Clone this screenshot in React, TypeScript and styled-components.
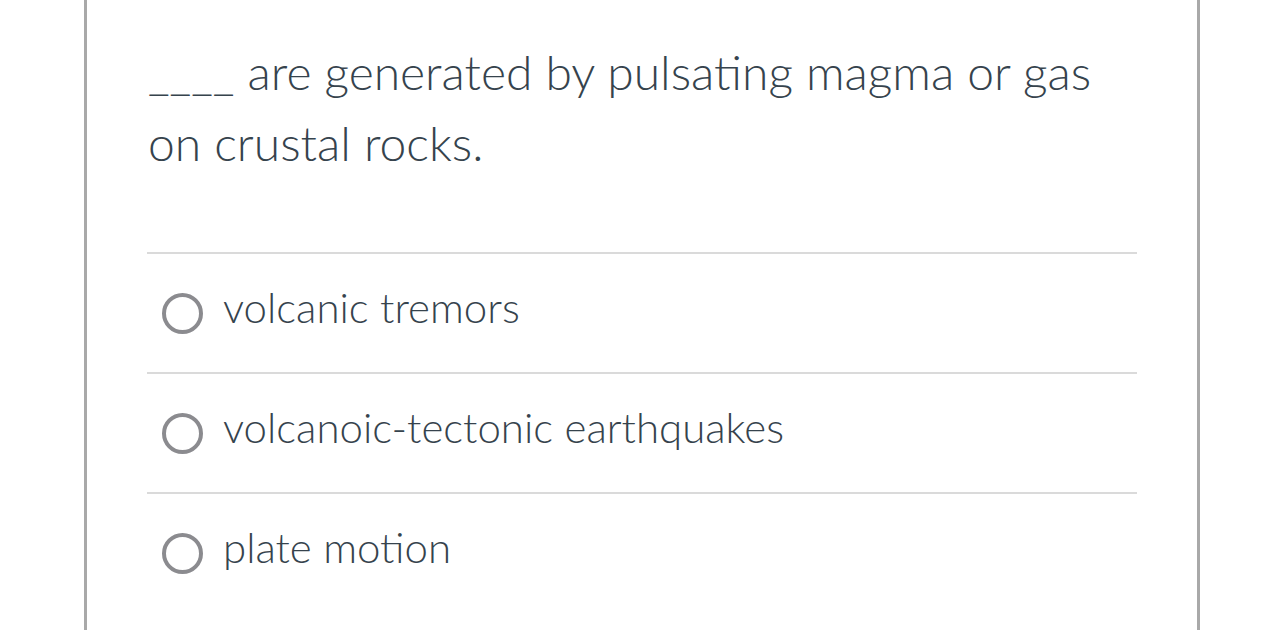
import styled, { createGlobalStyle } from 'styled-components'

const GlobalStyle = createGlobalStyle`
  *, *::before, *::after {
    box-sizing: border-box;
  }
  html, body {
    margin: 0;
    padding: 0;
    background: #ffffff;
  }
  body {
    font-family: "Lato Light", Lato, "Open Sans", "Liberation Sans", sans-serif;
    color: #2d3b45;
  }
`

const answers = ['volcanic tremors', 'volcanoic-tectonic earthquakes', 'plate motion']

const App = () => {
  return (
    <>
      <GlobalStyle />
      <Page>
        <QuestionCard>
          <QuestionText>____ are generated by pulsating magma or gas on crustal rocks.</QuestionText>
          <AnswerList>
            {answers.map((answer) => (
              <AnswerRow key={answer}>
                <Radio />
                <AnswerLabel>{answer}</AnswerLabel>
              </AnswerRow>
            ))}
          </AnswerList>
        </QuestionCard>
      </Page>
    </>
  )
}

export default App

const Page = styled.div`
  height: 630px;
  overflow: hidden;
  padding-left: 84px;
`

const QuestionCard = styled.div`
  width: 1116px;
  height: 100%;
  border-left: 3px solid #a9a9a9;
  border-right: 3px solid #a9a9a9;
  padding: 36px 60px 0 60px;
`

const QuestionText = styled.div`
  font-size: 48px;
  font-weight: 300;
  line-height: 71px;
  color: #36434d;
  padding-left: 1px;
  margin-bottom: 74px;
  max-width: 990px;
`

const AnswerList = styled.div`
  display: flex;
  flex-direction: column;
`

const AnswerRow = styled.div`
  display: flex;
  align-items: center;
  height: 120px;
  border-top: 2px solid #dadada;
  padding-left: 15px;
  gap: 20px;
`

const Radio = styled.span`
  width: 41px;
  height: 41px;
  border-radius: 50%;
  border: 4px solid #8b8b8f;
  flex-shrink: 0;
`

const AnswerLabel = styled.span`
  font-size: 42px;
  font-weight: 300;
  color: #36434d;
  margin-top: -12px;
`
